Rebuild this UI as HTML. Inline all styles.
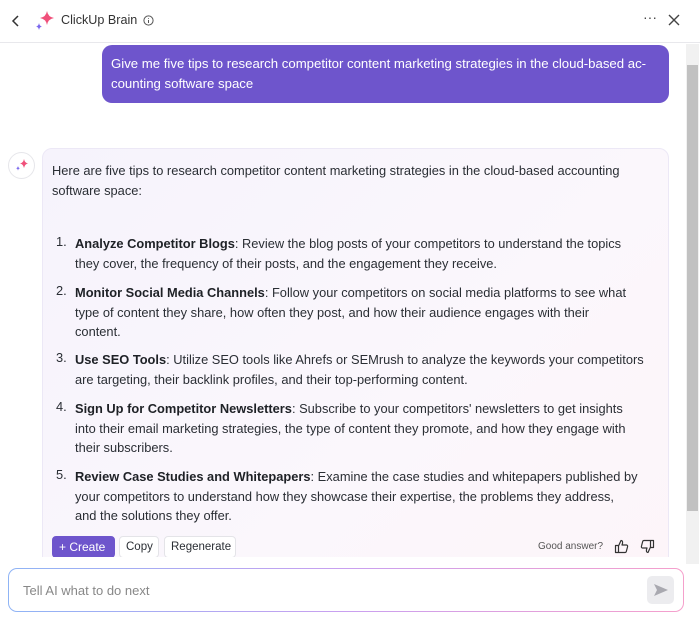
<!DOCTYPE html>
<html><head><meta charset="utf-8"><style>
*{box-sizing:border-box;margin:0;padding:0}
body{width:700px;height:619px;background:#fff;font-family:"Liberation Sans",sans-serif;color:#2a2e34;position:relative;overflow:hidden}
.hdr{position:absolute;left:0;top:0;width:700px;height:43px;border-bottom:1px solid #e8e8ec}
.t{position:absolute;white-space:nowrap}
.bub{position:absolute;left:102px;top:45px;width:567px;height:58px;background:#6e55cc;border-radius:10px;color:#fff;font-size:13.2px;line-height:20px;padding:9px 0 0 9px}
.box{position:absolute;left:42px;top:148px;width:627px;height:420px;border:1px solid #ece8f6;border-radius:10px;background:linear-gradient(135deg,#f6f3fc,#fbf7fc 60%,#fdf5f9)}
.txt{position:absolute;left:52px;font-size:12.85px;line-height:19.6px;white-space:nowrap;color:#2a2e34}
.n{position:absolute;left:56px;font-size:12.85px}
b{font-weight:bold;color:#1e2126}
.sb{position:absolute;left:686px;top:44px;width:13px;height:520px;background:#f1f1f1}
.btn{position:absolute;top:536px;height:22px;border:1px solid #e4e4e8;border-radius:4px;background:#fff;font-size:12px;line-height:20px;padding:0 6px}
</style></head><body>
<div class="hdr"></div>
<svg style="position:absolute;left:11px;top:14px" width="10" height="14"><path d="M7 2 L2 7 L7 12" stroke="#333" stroke-width="1.5" fill="none"/></svg>
<svg style="position:absolute;left:33px;top:9px" width="24" height="24"><path d="M14 2 Q15 8 21 9 Q15 10 14 16 Q13 10 7 9 Q13 8 14 2Z" fill="#f0507a"/><path d="M6 14 Q6.5 17 9 17.5 Q6.5 18 6 21 Q5.5 18 3 17.5 Q5.5 17 6 14Z" fill="#7b68ee"/></svg>
<div class="t" style="left:61px;top:13px;font-size:12.6px;color:#333">ClickUp Brain</div>
<svg style="position:absolute;left:143px;top:15px" width="11" height="11"><circle cx="5.5" cy="5.5" r="4.6" stroke="#555" fill="none"/><path d="M5.5 5v3M5.5 3v.8" stroke="#555"/></svg>
<div class="t" style="left:643px;top:9px;font-size:14px;color:#444">···</div>
<svg style="position:absolute;left:667px;top:13px" width="14" height="14"><path d="M2 2L12 12M12 2L2 12" stroke="#444" stroke-width="1.4"/></svg>
<div class="sb"><div style="position:absolute;left:1px;top:21px;width:11px;height:446px;background:#c1c1c1"></div></div>
<div class="bub">Give me five tips to research competitor content marketing strategies in the cloud-based ac-<br>counting software space</div>
<div style="position:absolute;left:8px;top:152px;width:27px;height:27px;border:1px solid #e6e6ea;border-radius:50%;background:#fff"></div>
<svg style="position:absolute;left:12px;top:156px" width="20" height="20"><path d="M12 3 Q12.8 7 16 7.5 Q12.8 8 12 12 Q11.2 8 8 7.5 Q11.2 7 12 3Z" fill="#f0507a"/><path d="M6 10 Q6.4 12 8 12.3 Q6.4 12.6 6 14.6 Q5.6 12.6 4 12.3 Q5.6 12 6 10Z" fill="#7b68ee"/></svg>
<div class="box"></div>
<div class="txt" style="top:161px">Here are five tips to research competitor content marketing strategies in the cloud-based accounting<br>software space:</div>
<div class="n" style="top:234px">1.</div>
<div class="txt" style="left:75px;top:234px"><b>Analyze Competitor Blogs</b>: Review the blog posts of your competitors to understand the topics<br>they cover, the frequency of their posts, and the engagement they receive.</div>
<div class="n" style="top:283px">2.</div>
<div class="txt" style="left:75px;top:283px"><b>Monitor Social Media Channels</b>: Follow your competitors on social media platforms to see what<br>type of content they share, how often they post, and how their audience engages with their<br>content.</div>
<div class="n" style="top:350px">3.</div>
<div class="txt" style="left:75px;top:350px"><b>Use SEO Tools</b>: Utilize SEO tools like Ahrefs or SEMrush to analyze the keywords your competitors<br>are targeting, their backlink profiles, and their top-performing content.</div>
<div class="n" style="top:399px">4.</div>
<div class="txt" style="left:75px;top:399px"><b>Sign Up for Competitor Newsletters</b>: Subscribe to your competitors' newsletters to get insights<br>into their email marketing strategies, the type of content they promote, and how they engage with<br>their subscribers.</div>
<div class="n" style="top:467px">5.</div>
<div class="txt" style="left:75px;top:467px"><b>Review Case Studies and Whitepapers</b>: Examine the case studies and whitepapers published by<br>your competitors to understand how they showcase their expertise, the problems they address,<br>and the solutions they offer.</div>
<div class="btn" style="left:52px;width:63px;background:#6e55cc;border-color:#6e55cc;color:#fff">+ Create</div>
<div class="btn" style="left:119px;width:40px;font-size:11.5px">Copy</div>
<div class="btn" style="left:164px;width:72px;font-size:11.5px">Regenerate</div>
<div class="t" style="left:538px;top:541px;font-size:10px;color:#555">Good answer?</div>
<svg style="position:absolute;left:614px;top:539px" width="15" height="15"><path d="M1.5 6.5h3v7h-3z M4.5 7 L7 1.5 Q9 1.5 8.5 4.5 L8 6 H12.5 Q14 6.3 13.5 8 L12.3 12.5 Q12 13.5 11 13.5 H4.5" fill="none" stroke="#333" stroke-width="1.2" stroke-linejoin="round"/></svg>
<svg style="position:absolute;left:640px;top:539px" width="15" height="15"><g transform="rotate(180 7.5 7.5)"><path d="M1.5 6.5h3v7h-3z M4.5 7 L7 1.5 Q9 1.5 8.5 4.5 L8 6 H12.5 Q14 6.3 13.5 8 L12.3 12.5 Q12 13.5 11 13.5 H4.5" fill="none" stroke="#333" stroke-width="1.2" stroke-linejoin="round"/></g></svg>
<div style="position:absolute;left:0;top:557px;width:686px;height:62px;background:#fff"></div>
<div style="position:absolute;left:8px;top:568px;width:676px;height:44px;border-radius:9px;background:linear-gradient(90deg,#8fb4f5,#c9a0f0,#f5a0cc);padding:1px"><div style="width:100%;height:100%;background:#fff;border-radius:8px"></div></div>
<div class="t" style="left:23px;top:583px;font-size:13px;color:#888">Tell AI what to do next</div>
<div style="position:absolute;left:647px;top:576px;width:27px;height:28px;background:#ececef;border-radius:5px"></div>
<svg style="position:absolute;left:653px;top:583px" width="16" height="14"><path d="M1 1L15 7L1 13L4 7Z" fill="#a9a9b0"/></svg>
</body></html>
